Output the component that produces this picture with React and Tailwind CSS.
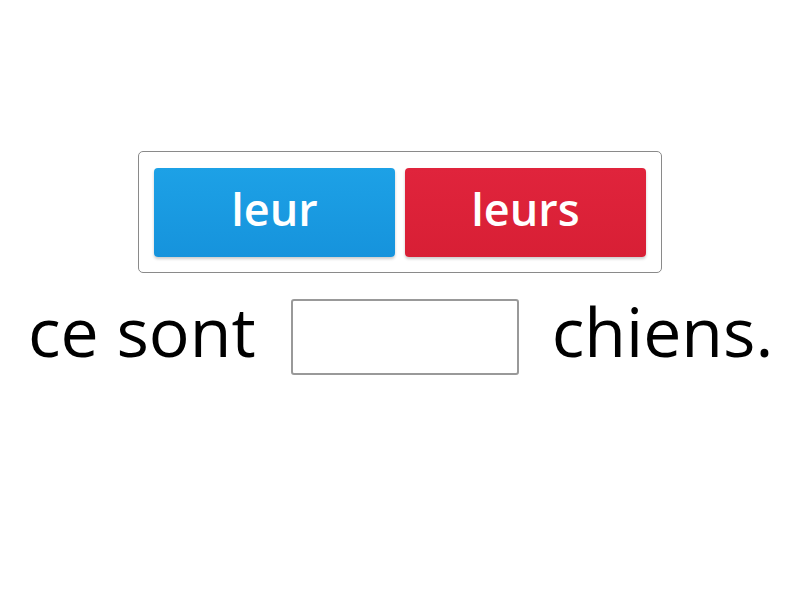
export default function App() {
  const options = [
    { label: "leur", tone: "bg-[linear-gradient(180deg,#1da1e6,#1693dc)]" },
    { label: "leurs", tone: "bg-[linear-gradient(180deg,#e0243c,#d81f35)]" },
  ];

  return (
    <div className="w-[800px] h-[600px] bg-white font-['Open_Sans',sans-serif] flex flex-col items-center">
      {/* answer choices */}
      <div className="mt-[151px] w-[524px] h-[122px] border border-[#8a8a8a] rounded-[5px] flex gap-[10px] px-[15px] pt-[16px]">
        {options.map((o) => (
          <div
            key={o.label}
            className={`w-[242px] h-[89px] rounded-[4px] ${o.tone} shadow-[0_2px_3px_rgba(0,0,0,0.2)] flex items-center justify-center text-white font-semibold text-[45px] leading-none pb-[9px]`}
          >
            {o.label}
          </div>
        ))}
      </div>

      {/* sentence with blank */}
      <div className="mt-[24px] flex items-center w-full pl-[28px]">
        <span className="text-[68px] leading-none text-black pb-[12px]">ce sont</span>
        <div className="ml-[35px] w-[228px] h-[76px] border-2 border-[#999] rounded-[3px]" />
        <span className="ml-[33px] text-[68px] leading-none text-black pb-[12px]">chiens.</span>
      </div>
    </div>
  );
}
